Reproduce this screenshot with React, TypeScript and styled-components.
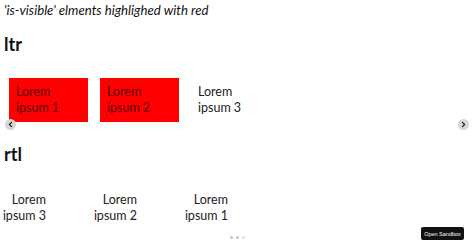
import React from "react";
import styled, { createGlobalStyle } from "styled-components";

const Global = createGlobalStyle`
  html, body { margin: 0; padding: 0; background: #fff; }
  body { font-family: "Lato", "Noto Sans", sans-serif; color: #111; }
`;

const Page = styled.div`
  width: 474px;
  height: 248px;
  position: relative;
  overflow: hidden;
  box-sizing: border-box;
  padding: 0 4px;
`;

const Note = styled.p`
  margin: 0;
  padding-top: 1px;
  font-size: 13.2px;
  line-height: 18px;
  font-style: italic;
`;

const Heading = styled.h2<{ $top: number }>`
  margin: ${(p) => p.$top}px 0 0;
  font-size: 18px;
  line-height: 22px;
  font-weight: 700;
`;

const Carousel = styled.div<{ $top: number }>`
  position: relative;
  margin: ${(p) => p.$top}px -4px 0;
`;

const Track = styled.div<{ $rtl?: boolean }>`
  display: flex;
  gap: 12px;
  overflow: hidden;
  direction: ${(p) => (p.$rtl ? "rtl" : "ltr")};
  width: ${(p) => (p.$rtl ? "244px" : "auto")};
  box-sizing: border-box;
  padding: ${(p) => (p.$rtl ? "0 9px 0 0" : "0 0 0 9px")};
`;

const Slide = styled.div<{ $visible?: boolean }>`
  flex: 0 0 79px;
  box-sizing: border-box;
  padding: 6px 7px;
  font-size: 12.5px;
  line-height: 16px;
  background: ${(p) => (p.$visible ? "#ff0000" : "transparent")};
  color: ${(p) => (p.$visible ? "#5a0000" : "#222")};
`;

const Arrow = styled.button<{ $side: "left" | "right" }>`
  position: absolute;
  top: 41px;
  ${(p) => (p.$side === "left" ? "left: 5px;" : "right: 5px;")}
  width: 11px;
  height: 11px;
  border-radius: 50%;
  border: none;
  padding: 0;
  background: #d6d6d6;
  display: flex;
  align-items: center;
  justify-content: center;
`;

const Dots = styled.div`
  display: flex;
  justify-content: center;
  gap: 3px;
  margin-top: 6px;
`;

const Dot = styled.span<{ $active?: boolean }>`
  width: 3px;
  height: 3px;
  border-radius: 50%;
  background: ${(p) => (p.$active ? "#c4c4c4" : "#e2e2e2")};
`;

const SandboxButton = styled.div`
  position: absolute;
  right: 10px;
  bottom: 8px;
  width: 43px;
  height: 13px;
  background: #111;
  color: #fff;
  border-radius: 2px;
  font-family: "Liberation Sans", Arial, sans-serif;
  font-size: 5.5px;
  display: flex;
  align-items: center;
  justify-content: center;
`;

const Chevron = ({ dir }: { dir: "left" | "right" }) => (
  <svg width="7" height="7" viewBox="0 0 10 10">
    <path
      d={dir === "left" ? "M6.5 2 L3.5 5 L6.5 8" : "M3.5 2 L6.5 5 L3.5 8"}
      fill="none"
      stroke="#222"
      strokeWidth="1.8"
      strokeLinecap="round"
      strokeLinejoin="round"
    />
  </svg>
);

export default function App() {
  return (
    <>
      <Global />
      <Page>
        <Note>'is-visible' elments highlighed with red</Note>
        <Heading $top={14}>ltr</Heading>
        <Carousel $top={23}>
          <Track>
            <Slide $visible>Lorem ipsum 1</Slide>
            <Slide $visible>Lorem ipsum 2</Slide>
            <Slide>Lorem ipsum 3</Slide>
          </Track>
          <Arrow $side="left" aria-label="previous">
            <Chevron dir="left" />
          </Arrow>
          <Arrow $side="right" aria-label="next">
            <Chevron dir="right" />
          </Arrow>
        </Carousel>
        <Heading $top={21}>rtl</Heading>
        <Carousel $top={21}>
          <Track $rtl>
            <Slide>Lorem ipsum 1</Slide>
            <Slide>Lorem ipsum 2</Slide>
            <Slide>Lorem ipsum 3</Slide>
          </Track>
        </Carousel>
        <Dots>
          <Dot $active />
          <Dot $active />
          <Dot />
        </Dots>
        <SandboxButton>Open Sandbox</SandboxButton>
      </Page>
    </>
  );
}
